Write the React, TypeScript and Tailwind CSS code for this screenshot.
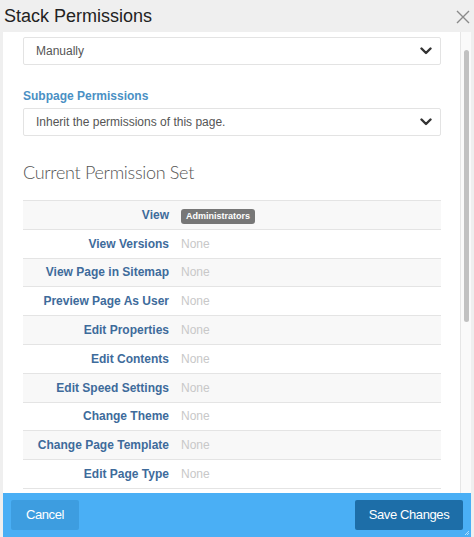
import React from "react";

const rows: { label: string; value?: string }[] = [
  { label: "View", value: "Administrators" },
  { label: "View Versions" },
  { label: "View Page in Sitemap" },
  { label: "Preview Page As User" },
  { label: "Edit Properties" },
  { label: "Edit Contents" },
  { label: "Edit Speed Settings" },
  { label: "Change Theme" },
  { label: "Change Page Template" },
  { label: "Edit Page Type" },
];

function Chevron() {
  return (
    <svg width="12" height="8" viewBox="0 0 12 8" className="text-[#333]">
      <path d="M1.5 1.5 L6 6 L10.5 1.5" fill="none" stroke="currentColor" strokeWidth="2.4" strokeLinecap="round" strokeLinejoin="round" />
    </svg>
  );
}

function Select({ text }: { text: string }) {
  return (
    <div className="flex h-[28px] items-center justify-between rounded-[2px] border border-[#e3e3e3] bg-white pl-[12px] pr-[8px] text-[12px] text-[#555]">
      <span>{text}</span>
      <Chevron />
    </div>
  );
}

export default function App() {
  return (
    <div
      className="flex h-[537px] w-[474px] flex-col overflow-hidden bg-[#efefef]"
      style={{ fontFamily: '"Liberation Sans", Arial, Helvetica, sans-serif' }}
    >
      <div className="relative flex h-[32px] shrink-0 items-center pl-[4px]">
        <span className="text-[18px] leading-none text-[#222]">Stack Permissions</span>
        <svg className="absolute right-[4px] top-[10px]" width="14" height="14" viewBox="0 0 14 14">
          <path d="M1 1 L13 13 M13 1 L1 13" stroke="#8a8a8a" strokeWidth="1.4" />
        </svg>
      </div>
      <div className="ml-[3px] mr-[3px] flex min-h-0 flex-1 bg-white">
        <div className="flex min-w-0 flex-1 flex-col overflow-hidden pl-[20px] pr-[19px] pt-[5px]">
          <Select text="Manually" />
          <div className="mt-[24px] text-[12px] font-bold leading-[14px] text-[#4a90c4]">Subpage Permissions</div>
          <div className="mt-[5px]">
            <Select text="Inherit the permissions of this page." />
          </div>
          <div
            className="mt-[24px] text-[18px] leading-[24px] tracking-[-0.3px] text-[#555]"
            style={{ fontFamily: 'Lato, "Liberation Sans", Arial, sans-serif', fontWeight: 300 }}
          >
            Current Permission Set
          </div>
          <div className="mt-[16px] border-t border-[#e4e4e4]">
            {rows.map((r, i) => (
              <div
                key={r.label}
                className={`flex h-[28.8px] items-center border-b border-[#e4e4e4] text-[12px] ${i % 2 === 0 ? "bg-[#f8f8f8]" : "bg-white"}`}
              >
                <div className="w-[152px] shrink-0 pr-[6px] text-right font-bold text-[#3e6b9b]">{r.label}</div>
                <div className="pl-[6px]">
                  {r.value ? (
                    <span className="inline-block rounded-[3px] bg-[#777] px-[5px] py-[1px] text-[9px] font-bold leading-[13px] text-white">
                      {r.value}
                    </span>
                  ) : (
                    <span className="text-[#c8c8c8]">None</span>
                  )}
                </div>
              </div>
            ))}
          </div>
        </div>
        <div className="relative w-[11px] shrink-0 border-l border-[#e6e6e6] bg-[#fafafa]">
          <div className="absolute left-[3px] top-[18px] h-[272px] w-[5px] rounded-full bg-[#c1c1c1]" />
        </div>
      </div>
      <div className="relative ml-[3px] mr-[3px] flex h-[44px] shrink-0 items-center justify-between bg-[#4aaff5] px-[8px]">
        <button className="h-[30px] w-[68px] rounded-[2px] bg-[#3d9de0] text-[13px] tracking-[-0.4px] text-white">Cancel</button>
        <button className="h-[30px] w-[108px] rounded-[2px] bg-[#1d6ea8] text-[13px] tracking-[-0.4px] text-white">Save Changes</button>
        <svg className="absolute bottom-[1px] right-[1px]" width="6" height="6" viewBox="0 0 6 6">
          <path d="M5 1 L1 5 M5 3 L3 5" stroke="#ffffff" strokeWidth="0.8" opacity="0.7" />
        </svg>
      </div>
    </div>
  );
}
